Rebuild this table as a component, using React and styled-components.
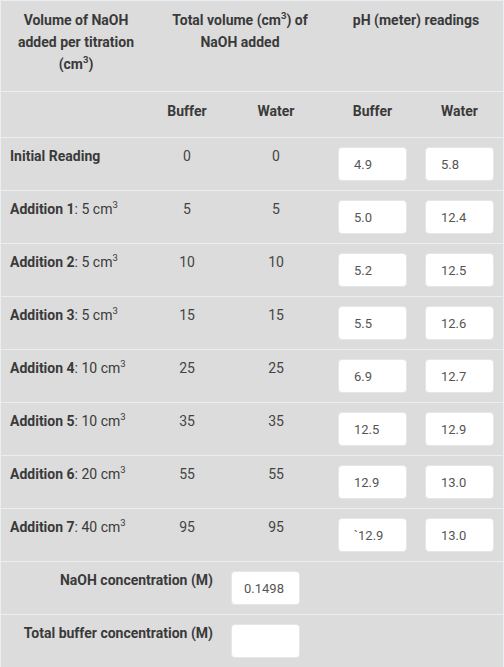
import React from "react";
import styled, { createGlobalStyle } from "styled-components";

const GlobalStyle = createGlobalStyle`
  body {
    margin: 0;
    font-family: Roboto, "Liberation Sans", sans-serif;
    background: #ffffff;
  }
`;

const rows = [
  { label: "Initial Reading", add: null, buffer: "0", water: "0", phB: "4.9", phW: "5.8" },
  { label: "Addition 1", add: "5", buffer: "5", water: "5", phB: "5.0", phW: "12.4" },
  { label: "Addition 2", add: "5", buffer: "10", water: "10", phB: "5.2", phW: "12.5" },
  { label: "Addition 3", add: "5", buffer: "15", water: "15", phB: "5.5", phW: "12.6" },
  { label: "Addition 4", add: "10", buffer: "25", water: "25", phB: "6.9", phW: "12.7" },
  { label: "Addition 5", add: "10", buffer: "35", water: "35", phB: "12.5", phW: "12.9" },
  { label: "Addition 6", add: "20", buffer: "55", water: "55", phB: "12.9", phW: "13.0" },
  { label: "Addition 7", add: "40", buffer: "95", water: "95", phB: "`12.9", phW: "13.0" },
];

const App = () => {
  return (
    <>
      <GlobalStyle />
      <Table>
        <Row>
          <HeadCell $tall>
            Volume of NaOH
            <br />
            added per titration
            <br />
            (cm<Sup>3</Sup>)
          </HeadCell>
          <HeadCell $span={2} $tall>
            Total volume (cm<Sup>3</Sup>) of
            <br />
            NaOH added
          </HeadCell>
          <HeadCell $span={2} $tall>
            pH (meter) readings
          </HeadCell>
        </Row>
        <Row>
          <HeadCell />
          <HeadCell>Buffer</HeadCell>
          <HeadCell>Water</HeadCell>
          <HeadCell>Buffer</HeadCell>
          <HeadCell>Water</HeadCell>
        </Row>
        {rows.map((r) => (
          <Row key={r.label}>
            <LabelCell>
              <b>{r.label}</b>
              {r.add && (
                <>
                  : {r.add} cm<Sup>3</Sup>
                </>
              )}
            </LabelCell>
            <ValueCell>{r.buffer}</ValueCell>
            <ValueCell>{r.water}</ValueCell>
            <InputCell>
              <Field defaultValue={r.phB} />
            </InputCell>
            <InputCell>
              <Field defaultValue={r.phW} />
            </InputCell>
          </Row>
        ))}
        <Row>
          <SummaryLabel>NaOH concentration (M)</SummaryLabel>
          <InputCell $left>
            <Field defaultValue="0.1498" $center />
          </InputCell>
        </Row>
        <Row>
          <SummaryLabel>Total buffer concentration (M)</SummaryLabel>
          <InputCell $left>
            <Field defaultValue="" />
          </InputCell>
        </Row>
      </Table>
    </>
  );
};

export default App;

const Table = styled.div`
  width: 504px;
  box-sizing: border-box;
  background: #dcdcdc;
  border: 1px solid #e8eef2;
  border-bottom: none;
  color: #444;
  font-size: 14px;
  line-height: 22px;
`;

const Row = styled.div`
  display: grid;
  grid-template-columns: 150px 72px 106px 87px 87px;
  & + & {
    border-top: 1px solid #e8eef2;
  }
`;

const Sup = styled.span`
  font-size: 0.68em;
  vertical-align: super;
  line-height: 0;
`;

const HeadCell = styled.div`
  grid-column: span ${(p) => p.$span || 1};
  padding: 8px 8px ${(p) => (p.$tall ? "16px" : "15px")};
  text-align: center;
  font-weight: 700;
  color: #3a3a3a;
`;

const LabelCell = styled.div`
  padding: 7px 8px 15px 9px;
  color: #3a3a3a;
  white-space: nowrap;
  b {
    font-weight: 700;
  }
`;

const ValueCell = styled.div`
  padding: 7px 8px 15px;
  text-align: center;
  color: #444;
`;

const SummaryLabel = styled.div`
  grid-column: 1 / 3;
  padding: 7px 10px 15px 8px;
  text-align: right;
  font-weight: 700;
  color: #3a3a3a;
  white-space: nowrap;
`;

const InputCell = styled.div`
  display: flex;
  justify-content: ${(p) => (p.$left ? "flex-start" : "center")};
  padding: 9px ${(p) => (p.$left ? "0 9px 8px" : "9px")};
`;

const Field = styled.input`
  width: 69px;
  height: 34px;
  box-sizing: border-box;
  border: 1px solid #e3e7ea;
  border-radius: 4px;
  background: #ffffff;
  padding: 0 0 0 ${(p) => (p.$center ? "12px" : "15px")};
  font-family: Roboto, "Liberation Sans", sans-serif;
  font-size: 13px;
  color: #555;
  outline: none;
`;
